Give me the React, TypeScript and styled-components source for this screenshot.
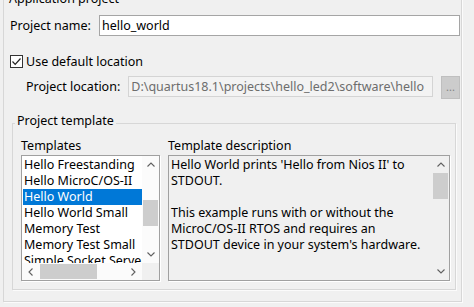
import styled, { createGlobalStyle } from 'styled-components';

const GlobalStyle = createGlobalStyle`
  html, body {
    margin: 0;
    padding: 0;
    background: #f0f0f0;
  }
  body {
    font-family: 'Noto Sans', 'Liberation Sans', sans-serif;
    font-size: 12.5px;
    color: #000;
    overflow: hidden;
  }
  * {
    box-sizing: border-box;
  }
`;

type Dir = 'up' | 'down' | 'left' | 'right';

const chevronPoints: Record<Dir, string> = {
  up: '0.5,4.5 4,1 7.5,4.5',
  down: '0.5,0.5 4,4 7.5,0.5',
  left: '4.5,0.5 1,4 4.5,7.5',
  right: '0.5,0.5 4,4 0.5,7.5',
};

function Chevron({ dir }: { dir: Dir }) {
  const vertical = dir === 'up' || dir === 'down';
  return (
    <svg width={vertical ? 8 : 5} height={vertical ? 5 : 8} viewBox={vertical ? '0 0 8 5' : '0 0 5 8'}>
      <polyline points={chevronPoints[dir]} fill="none" stroke="#606060" strokeWidth="1.1" />
    </svg>
  );
}

function VScroll({ offset, size, track }: { offset: number; size: number; track: string }) {
  return (
    <VBar $track={track}>
      <ScrollButton>
        <Chevron dir="up" />
      </ScrollButton>
      <VTrack>
        <VThumb $offset={offset} $size={size} />
      </VTrack>
      <ScrollButton>
        <Chevron dir="down" />
      </ScrollButton>
    </VBar>
  );
}

function HScroll({ offset, size, track }: { offset: number; size: number; track: string }) {
  return (
    <HBar $track={track}>
      <ScrollButton>
        <Chevron dir="left" />
      </ScrollButton>
      <HTrack>
        <HThumb $offset={offset} $size={size} />
      </HTrack>
      <ScrollButton>
        <Chevron dir="right" />
      </ScrollButton>
    </HBar>
  );
}

const templates = [
  'Hello Freestanding',
  'Hello MicroC/OS-II',
  'Hello World',
  'Hello World Small',
  'Memory Test',
  'Memory Test Small',
  'Simple Socket Server',
];

const description = `Hello World prints 'Hello from Nios II' to
STDOUT.

This example runs with or without the
MicroC/OS-II RTOS and requires an
STDOUT device in your system's hardware.`;

export default function App() {
  return (
    <>
      <GlobalStyle />
      <Window>
        <OuterGroup>
          <OuterTitle>Application project</OuterTitle>
          <FormRow>
            <FieldLabel>Project name:</FieldLabel>
            <TextInput value="hello_world" readOnly />
          </FormRow>
          <CheckRow>
            <CheckBox>
              <svg width="11" height="11" viewBox="0 0 11 11">
                <polyline points="1.5,5.5 4.2,8.3 9.5,2.5" fill="none" stroke="#222" strokeWidth="1.2" />
              </svg>
            </CheckBox>
            <span>Use default location</span>
          </CheckRow>
          <LocationRow>
            <FieldLabel>Project location:</FieldLabel>
            <TextInput value="D:\quartus18.1\projects\hello_led2\software\hello" disabled />
            <BrowseButton disabled>...</BrowseButton>
          </LocationRow>
          <InnerGroup>
            <InnerTitle>Project template</InnerTitle>
            <TemplateGrid>
              <ColumnTitle>Templates</ColumnTitle>
              <ColumnTitle>Template description</ColumnTitle>
              <ListBox>
                <ListItems>
                  {templates.map((t) => (
                    <ListItem key={t} $selected={t === 'Hello World'}>
                      {t}
                    </ListItem>
                  ))}
                </ListItems>
                <VScroll offset={27} size={26} track="#fbfbfb" />
                <HScroll offset={1} size={57} track="#fbfbfb" />
                <Corner />
              </ListBox>
              <DescBox>
                <DescText>{description}</DescText>
                <VScroll offset={0} size={26} track="#f0f0f0" />
              </DescBox>
            </TemplateGrid>
          </InnerGroup>
        </OuterGroup>
      </Window>
    </>
  );
}

const Window = styled.div`
  width: 474px;
  height: 307px;
  overflow: hidden;
  padding-left: 3px;
`;

const GroupBox = styled.fieldset`
  margin: 0;
  min-width: 0;
  border: 1px solid #d7d7d7;
  box-shadow: 1px 1px 0 #fbfbfb;
`;

const OuterGroup = styled(GroupBox)`
  width: 459px;
  margin-top: -9px;
  padding: 8px 1px 11px 6px;
`;

const InnerGroup = styled(GroupBox)`
  margin: 14px 4px 0 2px;
  padding: 5px 5px 8px 8px;
`;

const OuterTitle = styled.legend`
  padding: 0 1px;
  margin-left: -2px;
  line-height: 16px;
`;

const InnerTitle = styled.legend`
  padding: 0 2px 4px;
  margin-left: -6px;
  line-height: 16px;
`;

const FormRow = styled.div`
  display: flex;
  align-items: center;
  gap: 8px;
  height: 21px;
`;

const LocationRow = styled(FormRow)`
  align-items: flex-start;
  height: 23px;
  margin-top: 4px;
  padding-left: 16px;
`;

const FieldLabel = styled.label`
  line-height: 21px;
  white-space: nowrap;
`;

const TextInput = styled.input`
  flex: 1;
  min-width: 0;
  height: 21px;
  margin: 0;
  padding: 0 2px;
  font: inherit;
  color: #000;
  background: #fff;
  border: 1px solid #a5a5a5;
  outline: none;

  &:disabled {
    color: #6d6d6d;
    background: #f3f3f3;
    border-color: #d4d4d4;
  }
`;

const BrowseButton = styled.button`
  width: 19px;
  height: 23px;
  margin: 0;
  padding: 0 0 3px;
  display: flex;
  align-items: center;
  justify-content: center;
  background: #cccccc;
  border: 1px solid #bfbfbf;
  color: #838383;
  font-family: inherit;
  font-size: 11px;
  line-height: 1;
`;

const CheckRow = styled.div`
  display: flex;
  align-items: center;
  gap: 3px;
  height: 21px;
  margin-top: 15px;
`;

const CheckBox = styled.span`
  width: 13px;
  height: 13px;
  display: flex;
  align-items: center;
  justify-content: center;
  background: #fff;
  border: 1px solid #333;
`;

const TemplateGrid = styled.div`
  display: grid;
  grid-template-columns: 139px 282px;
  grid-template-rows: 16px 126px;
  column-gap: 8px;
  row-gap: 1px;
`;

const ColumnTitle = styled.div`
  line-height: 16px;
  white-space: nowrap;
`;

const SunkenBox = styled.div`
  display: grid;
  grid-template-columns: 1fr 17px;
  border: 1px solid #a0a0a0;
  box-shadow: 1px 1px 0 #fff;
  overflow: hidden;
`;

const ListBox = styled(SunkenBox)`
  grid-template-rows: 1fr 17px;
  background: #fff;
`;

const DescBox = styled(SunkenBox)`
  background: #f0f0f0;
`;

const ListItems = styled.div`
  padding: 1px 0 0 1px;
  min-height: 0;
  overflow: hidden;
`;

const ListItem = styled.div<{ $selected?: boolean }>`
  height: 16px;
  line-height: 16px;
  padding: 0 1px;
  white-space: nowrap;
  background: ${(p) => (p.$selected ? '#0078d7' : 'transparent')};
  color: ${(p) => (p.$selected ? '#fff' : '#000')};
`;

const DescText = styled.div`
  padding: 1px 0 0 2px;
  line-height: 16px;
  white-space: pre;
  overflow: hidden;
`;

const VBar = styled.div<{ $track: string }>`
  display: grid;
  grid-template-rows: 17px 1fr 17px;
  background: ${(p) => p.$track};
  min-height: 0;
`;

const HBar = styled.div<{ $track: string }>`
  display: grid;
  grid-template-columns: 17px 1fr 17px;
  background: ${(p) => p.$track};
`;

const ScrollButton = styled.div`
  display: flex;
  align-items: center;
  justify-content: center;
`;

const VTrack = styled.div`
  padding: 0 1px;
  overflow: hidden;
`;

const HTrack = styled.div`
  padding: 1px 0;
  overflow: hidden;
`;

const VThumb = styled.div<{ $offset: number; $size: number }>`
  margin-top: ${(p) => p.$offset}px;
  height: ${(p) => p.$size}px;
  background: #cdcdcd;
`;

const HThumb = styled.div<{ $offset: number; $size: number }>`
  margin-left: ${(p) => p.$offset}px;
  width: ${(p) => p.$size}px;
  height: 100%;
  background: #cdcdcd;
`;

const Corner = styled.div`
  background: #f0f0f0;
`;
